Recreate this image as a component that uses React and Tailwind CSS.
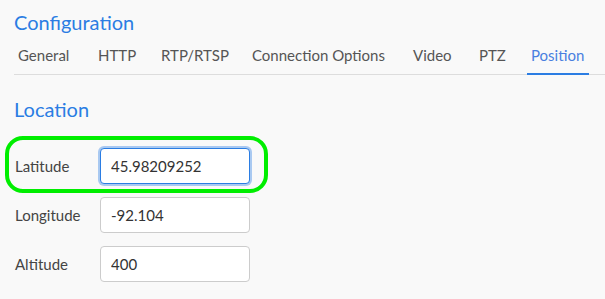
import * as React from 'react';

const tabs = [
    { label: 'General', w: 'w-[80px]' },
    { label: 'HTTP', w: 'w-[63px]' },
    { label: 'RTP/RTSP', w: 'w-[91px]' },
    { label: 'Connection Options', w: 'w-[161px]' },
    { label: 'Video', w: 'w-[66px]' },
    { label: 'PTZ', w: 'w-[52px]' },
    { label: 'Position', w: 'w-[62px]', active: true },
];

const fields = [
    { label: 'Latitude', value: '45.98209252', focused: true },
    { label: 'Longitude', value: '-92.104' },
    { label: 'Altitude', value: '400' },
];

export default function App() {
    return (
        <div
            className="relative min-h-screen bg-[#f9f9f9] pl-[14px] pt-[8px]"
            style={{ fontFamily: 'Lato, "Open Sans", sans-serif' }}
        >
            {/* Titulo */}
            <h1 className="text-[20px] leading-[28px] text-[#2b7de3]">Configuration</h1>

            {/* Pestañas */}
            <div className="flex border-b border-[#dddddd]">
                {tabs.map((t) => (
                    <div
                        key={t.label}
                        className={`relative h-[38px] flex items-center pl-[4px] shrink-0 text-[15px] ${t.w} ${
                            t.active ? 'text-[#4a7fe0]' : 'text-[#555555]'
                        }`}
                    >
                        {t.label}
                        {t.active && (
                            <span className="absolute left-0 right-0 bottom-[-1px] h-[2px] bg-[#2b7de3]" />
                        )}
                    </div>
                ))}
            </div>

            {/* Ubicacion */}
            <h2 className="mt-[20px] text-[20px] leading-[28px] text-[#2b7de3]">Location</h2>

            <div className="mt-[25px] flex flex-col gap-[13px]">
                {fields.map((f) => (
                    <div key={f.label} className="flex items-center">
                        <span className="w-[86px] pl-[1px] text-[15px] text-[#444444]">{f.label}</span>
                        <input
                            readOnly
                            value={f.value}
                            className={`w-[150px] h-[36px] rounded-[4px] bg-white pl-[10px] text-[15px] text-[#333333] outline-none border ${
                                f.focused
                                    ? 'border-[#2b7de3] ring-[2px] ring-[#a9c9f1]'
                                    : 'border-[#cccccc]'
                            }`}
                            style={{ fontFamily: 'Lato, "Open Sans", sans-serif' }}
                        />
                    </div>
                ))}
            </div>

            {/* Marco verde de anotacion */}
            <div className="absolute left-[5px] top-[136px] w-[263px] h-[57px] border-4 border-[#00ee00] rounded-[18px] pointer-events-none" />
        </div>
    );
}
